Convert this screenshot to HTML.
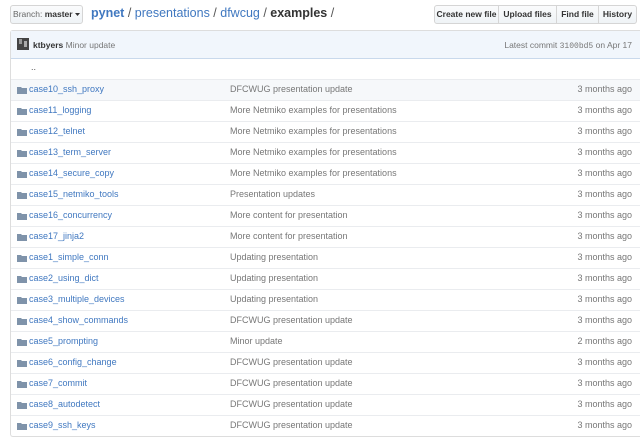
<!DOCTYPE html>
<html><head><meta charset="utf-8"><style>
*{box-sizing:border-box;margin:0;padding:0}
body{width:640px;height:439px;overflow:hidden;background:#fff;font-family:"Liberation Sans",Arial,sans-serif;font-size:9px;color:#333;position:relative}
.btn{position:absolute;top:5px;height:19px;border:1px solid #d5d5d5;border-radius:3px;background:linear-gradient(#fafbfc,#eff3f6);font-size:8.5px;font-weight:bold;color:#333;line-height:17px;text-align:center}
.crumb{position:absolute;left:91px;top:6px;font-size:12.5px;color:#555}
.crumb a{color:#4078c0;text-decoration:none}
.box{position:absolute;left:10px;top:30px;width:640px;height:407px;border:1px solid #ddd;border-radius:3px;border-right:none}
.hdr{height:28px;background:#f1f6fc;border-bottom:1px solid #c9d9ec;position:relative}
.row{position:absolute;left:0;width:630px;height:21px;border-top:1px solid #eaecef;font-size:9px;line-height:19px}
.row .n{position:absolute;left:18px;color:#4078c0}
.row .m{position:absolute;left:219px;color:#777}
.row .t{position:absolute;right:9px;color:#777}
.row svg{position:absolute;left:6px;top:6px}
</style></head><body>
<div class="btn" style="left:10px;width:73px;font-weight:normal;color:#666">Branch: <b style="color:#333">master</b> <svg width="5" height="3" style="vertical-align:middle"><path d="M0 0h5L2.5 3z" fill="#333"/></svg></div>
<div class="crumb"><a style="font-weight:bold">pynet</a> / <a>presentations</a> / <a>dfwcug</a> / <b style="color:#333">examples</b> /</div>
<div class="btn" style="left:434px;width:65px;border-radius:3px 0 0 3px">Create new file</div>
<div class="btn" style="left:498px;width:59px;border-radius:0">Upload files</div>
<div class="btn" style="left:556px;width:43px;border-radius:0">Find file</div>
<div class="btn" style="left:598px;width:39px;border-radius:0 3px 3px 0">History</div>
<div class="box">
<div class="hdr">
<svg width="12" height="12" style="position:absolute;left:6px;top:7px"><rect width="12" height="12" fill="#444"/><rect x="2" y="1" width="3" height="5" fill="#999"/><rect x="7" y="3" width="3" height="6" fill="#aaa"/></svg>
<span style="position:absolute;left:22px;top:9px;font-size:8.5px"><b>ktbyers</b> <span style="color:#777">Minor update</span></span>
<span style="position:absolute;right:18px;top:9px;font-size:8.5px;color:#777">Latest commit <span style="font-family:'Liberation Mono',monospace;font-size:8px">3100bd5</span> on Apr 17</span>
</div>
<div style="position:absolute;left:20px;top:31px;color:#555;font-size:9px">..</div>
</div>
<div id="rows"></div>
<script>
var d=[["case10_ssh_proxy","DFCWUG presentation update","3"],["case11_logging","More Netmiko examples for presentations","3"],["case12_telnet","More Netmiko examples for presentations","3"],["case13_term_server","More Netmiko examples for presentations","3"],["case14_secure_copy","More Netmiko examples for presentations","3"],["case15_netmiko_tools","Presentation updates","3"],["case16_concurrency","More content for presentation","3"],["case17_jinja2","More content for presentation","3"],["case1_simple_conn","Updating presentation","3"],["case2_using_dict","Updating presentation","3"],["case3_multiple_devices","Updating presentation","3"],["case4_show_commands","DFCWUG presentation update","3"],["case5_prompting","Minor update","2"],["case6_config_change","DFCWUG presentation update","3"],["case7_commit","DFCWUG presentation update","3"],["case8_autodetect","DFCWUG presentation update","3"],["case9_ssh_keys","DFCWUG presentation update","3"]];
var h="";d.forEach(function(r,i){h+='<div class="row" style="left:11px;top:'+(79+i*21)+'px;'+(i==0?'background:#f6f8fa':'')+'"><svg width="10" height="8"><path d="M0 1h4l1 1h5v6H0z" fill="#7f93aa"/></svg><span class="n">'+r[0]+'</span><span class="m">'+r[1]+'</span><span class="t">'+r[2]+' months ago</span></div>';});
document.getElementById("rows").innerHTML=h;
</script>
</body></html>
